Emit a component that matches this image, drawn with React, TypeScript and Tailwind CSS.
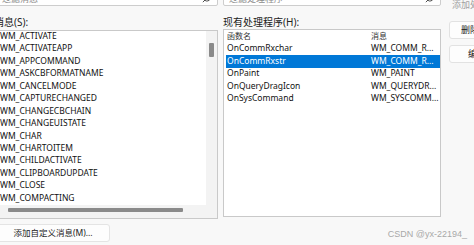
import { Search } from "lucide-react"

const messages = [
  "WM_ACTIVATE",
  "WM_ACTIVATEAPP",
  "WM_APPCOMMAND",
  "WM_ASKCBFORMATNAME",
  "WM_CANCELMODE",
  "WM_CAPTURECHANGED",
  "WM_CHANGECBCHAIN",
  "WM_CHANGEUISTATE",
  "WM_CHAR",
  "WM_CHARTOITEM",
  "WM_CHILDACTIVATE",
  "WM_CLIPBOARDUPDATE",
  "WM_CLOSE",
  "WM_COMPACTING",
  "WM_COMPAREITEM",
]

const handlers = [
  { name: "OnCommRxchar", msg: "WM_COMM_R..." },
  { name: "OnCommRxstr", msg: "WM_COMM_R...", selected: true },
  { name: "OnPaint", msg: "WM_PAINT" },
  { name: "OnQueryDragIcon", msg: "WM_QUERYDR..." },
  { name: "OnSysCommand", msg: "WM_SYSCOMM..." },
]

function SearchBox({ placeholder }: { placeholder: string }) {
  return (
    <div className="h-[22px] mt-[-16px] bg-white border border-[#cdcdcd] rounded-[2px] flex items-end justify-between pl-[5px] pr-[6px] pb-[1px]">
      <span className="text-[9px] leading-[10px] text-[#8a8a8a] whitespace-nowrap">{placeholder}</span>
      <Search className="w-[9px] h-[9px] mb-[1px] text-[#444] -scale-x-100" strokeWidth={2.5} />
    </div>
  )
}

function SideButton({ label, disabled, className }: { label: string; disabled?: boolean; className: string }) {
  return (
    <div
      className={`h-[18px] w-[60px] flex items-center rounded-[3px] text-[9px] whitespace-nowrap ${
        disabled ? "text-[#a0a0a0]" : "bg-[#fdfdfd] border border-[#e2e2e2] text-[#1a1a1a]"
      } ${className}`}
    >
      {label}
    </div>
  )
}

export default function App() {
  return (
    <div className="w-[474px] h-[245px] overflow-hidden relative bg-[#f8f8f8] text-[#111] font-['Noto_Sans','Noto_Sans_CJK_SC',sans-serif]">
      <div className="flex ml-[-4px]">
        {/* messages */}
        <div className="flex flex-col w-[222px] shrink-0">
          <SearchBox placeholder="过滤消息" />
          <div className="mt-[10px] h-[13px] leading-[13px] text-[10px] ml-[-2px] text-[#222] whitespace-nowrap">消息(S):</div>
          <div className="mt-[1px] h-[189px] border border-[#c9c9c9] bg-white flex flex-col">
            <div className="flex flex-1 min-h-0">
              <div className="flex-1 overflow-hidden mt-[-1px] pl-[3px]">
                {messages.map((m) => (
                  <div key={m} className="h-[12.45px] leading-[12.45px] text-[8.5px] whitespace-nowrap">
                    {m}
                  </div>
                ))}
              </div>
              <div className="w-[11px] bg-[#f3f3f3] pt-[12px] pl-[3px]">
                <div className="w-[5px] h-[14px] bg-[#8a8a8a] rounded-[1px]" />
              </div>
            </div>
            <div className="h-[13px] bg-[#f3f3f3] pt-[3px] pl-[11px]">
              <div className="w-[175px] h-[4px] bg-[#8a8a8a] rounded-[1px]" />
            </div>
          </div>
          <div className="mt-[5px] h-[18px] w-[114px] bg-[#fdfdfd] border border-[#e4e4e4] rounded-[3px] flex items-center justify-center text-[8.5px] text-[#222] whitespace-nowrap">
            添加自定义消息(M)...
          </div>
        </div>

        {/* handlers */}
        <div className="flex flex-col w-[218px] ml-[5px] shrink-0">
          <SearchBox placeholder="过滤处理程序" />
          <div className="mt-[10px] h-[13px] leading-[13px] text-[10px] text-[#222] whitespace-nowrap">现有处理程序(H):</div>
          <div className="h-[188px] border border-[#c9c9c9] bg-white pl-[2px]">
            <div className="flex h-[12.5px] items-center text-[8px] text-[#333]">
              <span className="w-[145px] pl-[1px]">函数名</span>
              <span>消息</span>
            </div>
            {handlers.map((h) => (
              <div
                key={h.name}
                className={`flex h-[12.5px] items-center text-[8.5px] whitespace-nowrap ${
                  h.selected ? "bg-[#0078d7] text-white" : ""
                }`}
              >
                <span className="w-[145px] pl-[1px]">{h.name}</span>
                <span>{h.msg}</span>
              </div>
            ))}
          </div>
        </div>

        {/* buttons */}
        <div className="flex flex-col ml-[8px] shrink-0">
          <SideButton label="添加处理程序(A)" disabled className="mt-[-4px] pl-[3px]" />
          <SideButton label="删除处理程序(D)" className="mt-[7px] pl-[11px]" />
          <SideButton label="编辑代码(E)" className="mt-[6px] pl-[18px]" />
        </div>
      </div>

      <div className="absolute right-[7px] bottom-[4px] text-[9px] text-[#a8a8a8] font-['Liberation_Sans',sans-serif]">
        CSDN @yx-22194_
      </div>
    </div>
  )
}
